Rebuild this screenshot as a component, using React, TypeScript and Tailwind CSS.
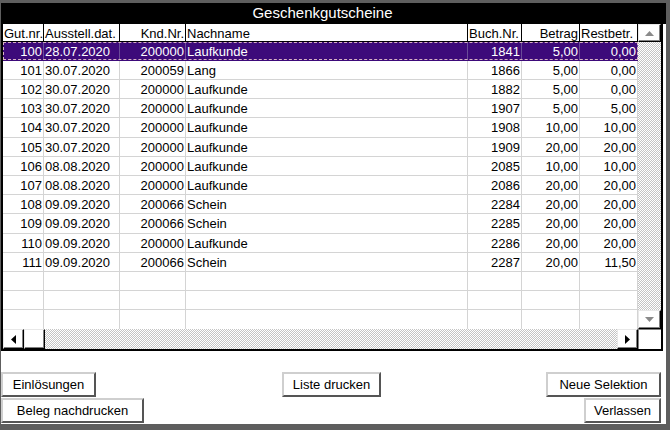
const rows = [
  ["100", "28.07.2020", "200000", "Laufkunde", "1841", "5,00", "0,00"],
  ["101", "30.07.2020", "200059", "Lang", "1866", "5,00", "0,00"],
  ["102", "30.07.2020", "200000", "Laufkunde", "1882", "5,00", "0,00"],
  ["103", "30.07.2020", "200000", "Laufkunde", "1907", "5,00", "5,00"],
  ["104", "30.07.2020", "200000", "Laufkunde", "1908", "10,00", "10,00"],
  ["105", "30.07.2020", "200000", "Laufkunde", "1909", "20,00", "20,00"],
  ["106", "08.08.2020", "200000", "Laufkunde", "2085", "10,00", "10,00"],
  ["107", "08.08.2020", "200000", "Laufkunde", "2086", "20,00", "20,00"],
  ["108", "09.09.2020", "200066", "Schein", "2284", "20,00", "20,00"],
  ["109", "09.09.2020", "200066", "Schein", "2285", "20,00", "20,00"],
  ["110", "09.09.2020", "200000", "Laufkunde", "2286", "20,00", "20,00"],
  ["111", "09.09.2020", "200066", "Schein", "2287", "20,00", "11,50"],
  ["", "", "", "", "", "", ""],
  ["", "", "", "", "", "", ""],
  ["", "", "", "", "", "", ""],
];

const headers = [
  { label: "Gut.nr.", right: false },
  { label: "Ausstell.dat.", right: false },
  { label: "Knd.Nr.", right: true },
  { label: "Nachname", right: false },
  { label: "Buch.Nr.", right: false },
  { label: "Betrag", right: true },
  { label: "Restbetr.", right: false },
];

// which data columns are right aligned
const alignRight = [true, false, true, false, true, true, true];

const cols = "grid grid-cols-[41px_76px_66px_282px_54px_58px_58px]";
const dither =
  "bg-[repeating-conic-gradient(#c4c4c4_0_25%,#ffffff_0_50%)] [background-size:2px_2px]";
const raised =
  "bg-white border border-t-[#e8e8e8] border-l-[#e8e8e8] border-b-black border-r-black shadow-[inset_-1px_-1px_0_#808080]";

function Arrow({ dir, color }: { dir: "up" | "down" | "left" | "right"; color: string }) {
  const pts = {
    up: "0,5 9,5 4.5,0",
    down: "0,0 9,0 4.5,5",
    left: "5,0 5,9 0,4.5",
    right: "0,0 0,9 5,4.5",
  }[dir];
  const w = dir === "up" || dir === "down" ? 9 : 5;
  const h = dir === "up" || dir === "down" ? 5 : 9;
  return (
    <svg width={w} height={h} viewBox={`0 0 ${w} ${h}`}>
      <polygon points={pts} fill={color} />
    </svg>
  );
}

function Btn({ label, className }: { label: string; className: string }) {
  return (
    <button
      className={`flex items-center justify-center bg-white text-[13px] text-black border-2 border-t-[#cfcfcf] border-l-[#cfcfcf] border-b-[#555555] border-r-[#555555] ${className}`}
    >
      {label}
    </button>
  );
}

export default function App() {
  return (
    <div className="w-[670px] h-[430px] bg-[#5e5e5e] pt-[3px] pl-[1px] pr-[4px] pb-[6px] font-['Liberation_Sans',Arial,sans-serif] text-black">
      <div className="flex h-full flex-col bg-white">
        <div className="flex h-[21px] items-center justify-center bg-black pr-[22px] text-[15px] text-white">
          Geschenkgutscheine
        </div>

        <div className="flex h-[327px] w-[662px] flex-col border-x-2 border-b-2 border-black">
          <div className="flex h-[305px]">
            <div className="w-[635px] overflow-hidden">
              <div className={`${cols} h-[18px] border-b border-black text-[13px] leading-[17px]`}>
                {headers.map((h) => (
                  <div
                    key={h.label}
                    className={`border-r border-black bg-white px-[1px] pt-[1px] whitespace-nowrap overflow-hidden ${h.right ? "text-right" : "text-left"}`}
                  >
                    {h.label}
                  </div>
                ))}
              </div>
              {rows.map((r, i) => {
                const sel = i === 0;
                const tall = i % 5 === 4;
                return (
                  <div
                    key={i}
                    className={`relative ${cols} ${tall ? "h-[20px] leading-[18px]" : "h-[19px] leading-[17px]"} border-b text-[13px] ${sel ? "border-[#3d0a7a] bg-[#3d0a7a] text-white" : "border-[#d4d4d4]"}`}
                  >
                    {r.map((c, j) => (
                      <div
                        key={j}
                        className={`border-r px-[1px] pt-[1px] whitespace-nowrap overflow-hidden ${sel ? "border-[#6a4c98]" : "border-[#d4d4d4]"} ${alignRight[j] ? "text-right" : "text-left"}`}
                      >
                        {c}
                      </div>
                    ))}
                    {sel && (
                      <span className="absolute inset-0 border border-dashed border-[#d9b3c4]" />
                    )}
                  </div>
                );
              })}
            </div>

            <div className="flex w-[23px] flex-col">
              <div className={`flex h-[18px] items-center justify-center ${raised}`}>
                <Arrow dir="up" color="#8a8a8a" />
              </div>
              <div className={`flex-1 ${dither}`} />
              <div className={`flex h-[19px] items-center justify-center ${raised}`}>
                <Arrow dir="down" color="#8a8a8a" />
              </div>
            </div>
          </div>

          <div className="flex h-[20px]">
            <div className={`flex w-[21px] items-center justify-center ${raised}`}>
              <Arrow dir="left" color="#000000" />
            </div>
            <div className={`w-[21px] ${raised}`} />
            <div className={`flex-1 ${dither}`} />
            <div className={`flex w-[21px] items-center justify-center ${raised}`}>
              <Arrow dir="right" color="#000000" />
            </div>
            <div className="w-[23px] border-l border-t border-[#808080] bg-white" />
          </div>
        </div>

        <div className="flex flex-1 flex-col pt-[21px] pr-[5px]">
          <div className="flex h-[25px]">
            <Btn label="Einlösungen" className="w-[95px]" />
            <Btn label="Liste drucken" className="ml-[186px] w-[99px]" />
            <Btn label="Neue Selektion" className="ml-auto w-[115px]" />
          </div>
          <div className="mt-[1px] flex h-[25px]">
            <Btn label="Beleg nachdrucken" className="w-[143px]" />
            <Btn label="Verlassen" className="ml-auto w-[77px]" />
          </div>
        </div>
      </div>
    </div>
  );
}
